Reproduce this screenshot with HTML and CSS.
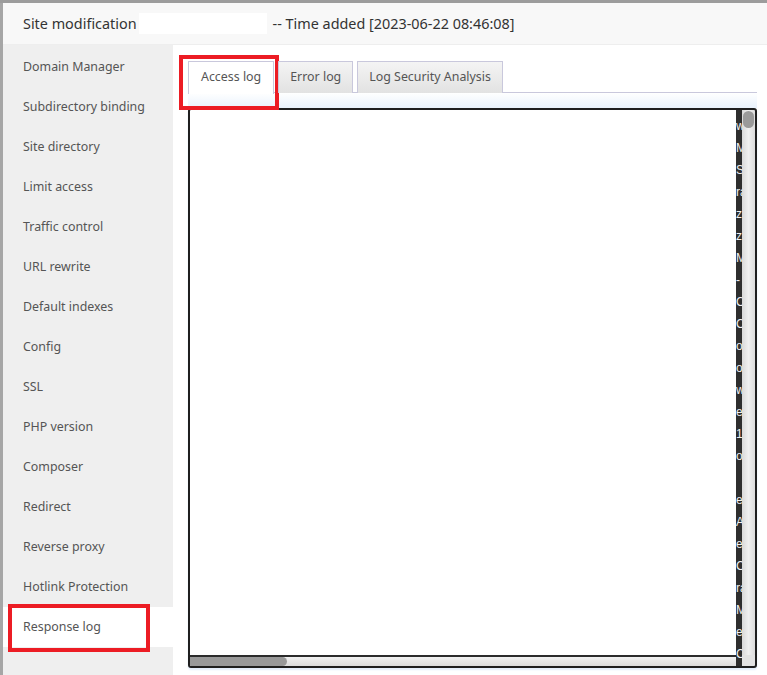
FILE: index.html
```html
<!DOCTYPE html>
<html>
<head>
<meta charset="utf-8">
<link rel="stylesheet" href="styles.css">
</head>
<body>
<div class="page">
  <div class="backdrop"></div>
  <div class="dialog">
    <div class="title">
      <span>Site modification</span>
      <span class="blot"></span>
      <span>-- Time added [2023-06-22 08:46:08]</span>
    </div>
    <div class="main">
      <ul class="sidebar">
        <li class="nav-item">Domain Manager</li>
        <li class="nav-item">Subdirectory binding</li>
        <li class="nav-item">Site directory</li>
        <li class="nav-item">Limit access</li>
        <li class="nav-item">Traffic control</li>
        <li class="nav-item">URL rewrite</li>
        <li class="nav-item">Default indexes</li>
        <li class="nav-item">Config</li>
        <li class="nav-item">SSL</li>
        <li class="nav-item">PHP version</li>
        <li class="nav-item">Composer</li>
        <li class="nav-item">Redirect</li>
        <li class="nav-item">Reverse proxy</li>
        <li class="nav-item">Hotlink Protection</li>
        <li class="nav-item active">Response log<span class="mark mark-nav"></span></li>
      </ul>
      <div class="content">
        <div class="tabs">
          <div class="tab active">Access log<span class="mark mark-tab"></span></div>
          <div class="tab">Error log</div>
          <div class="tab">Log Security Analysis</div>
        </div>
        <div class="glow"></div>
        <div class="logbox">
          <div class="log-text"></div>
          <div class="log-edge">
            <span>w</span><span>M</span><span>S</span><span>ra</span><span>z</span><span>z</span><span>M</span><span>-</span><span>O</span><span>O</span><span>o</span><span>o</span><span>w</span><span>e</span><span>1</span><span>o</span><span>&nbsp;</span><span>e</span><span>A</span><span>e</span><span>C</span><span>ra</span><span>M</span><span>e</span><span>C</span>
          </div>
          <div class="vscroll"><div class="vthumb"></div></div>
          <div class="hscroll"><div class="hthumb"></div></div>
          <div class="corner"></div>
        </div>
      </div>
    </div>
  </div>
</div>
</body>
</html>
```
FILE: styles.css
```css
* { box-sizing: border-box; }
html, body { margin: 0; padding: 0; }
body {
  background: #9c9c9c;
  font-family: "Noto Sans", "Open Sans", sans-serif;
  color: #555;
  overflow: hidden;
}
.page {
  display: flex;
  height: 675px;
  padding-top: 3px;
}
.backdrop {
  width: 3px;
  background: #a6a6a6;
}
.dialog {
  flex: 1;
  display: flex;
  flex-direction: column;
  background: #fff;
  height: 672px;
}
.title {
  height: 42px;
  line-height: 42px;
  background: #f8f8f8;
  border-bottom: 1px solid #eeeeee;
  padding-left: 20px;
  font-size: 14.4px;
  color: #333;
  display: flex;
  align-items: center;
  white-space: nowrap;
}
.blot {
  display: inline-block;
  width: 128px;
  height: 21px;
  background: #fff;
  margin: 0 6px 0 2px;
}
.main {
  flex: 1;
  display: flex;
  min-height: 0;
}
.sidebar {
  list-style: none;
  margin: 0;
  padding: 2px 0 0;
  width: 170px;
  background: #efefef;
}
.nav-item {
  position: relative;
  height: 40px;
  line-height: 40px;
  padding-left: 20px;
  font-size: 12.4px;
  color: #555;
  white-space: nowrap;
}
.nav-item.active { background: #fff; }
.mark {
  position: absolute;
  border: 4px solid #ec1c24;
  pointer-events: none;
}
.mark-nav { left: 5px; top: -3px; width: 142px; height: 48px; }
.mark-tab { left: -10px; top: -7px; width: 100px; height: 55px; }
.content {
  flex: 1;
  padding: 16px 10px 0 15px;
  display: flex;
  flex-direction: column;
}
.tabs {
  display: flex;
  gap: 4px;
  height: 32px;
  border-bottom: 1px solid #c9c8dc;
}
.tab {
  position: relative;
  height: 32px;
  line-height: 30px;
  padding: 0 11px;
  font-size: 12.4px;
  color: #555;
  border: 1px solid #c9c8dc;
  border-bottom: none;
  background: linear-gradient(#f4f4f4, #e2e2e2);
  white-space: nowrap;
}
.tab.active {
  background: #fff;
  height: 33px;
  padding: 0 12px;
}
.glow {
  height: 15px;
  background: linear-gradient(#ffffff, #e9f2fc);
}
.logbox {
  height: 560px;
  border: 2px solid #1f1f1f;
  border-radius: 3px;
  display: grid;
  grid-template-columns: 1fr 6px 13px;
  grid-template-rows: 1fr 11px;
  overflow: hidden;
  background: #2b2b2b;
  box-shadow: 0 2px 2px #e3eefb;
}
.log-text { background: #fff; }
.log-edge {
  background: #2e2e2e;
  overflow: hidden;
  display: flex;
  flex-direction: column;
  padding-top: 5px;
  font-family: "Liberation Sans", sans-serif;
  font-size: 12px;
  color: #f2f2f2;
  line-height: 22px;
  white-space: nowrap;
  grid-row: 1 / 3;
  grid-column: 2;
}
.vscroll {
  background: linear-gradient(90deg, #d9d9d9, #f0f0f0 50%, #dcdcdc);
  padding: 1px 1px;
}
.vthumb {
  height: 17px;
  background: #9a9a9a;
  border-radius: 6px;
}
.hscroll {
  grid-column: 1;
  background: linear-gradient(#f1f1f1, #dcdcdc);
  border-top: 2px solid #2b2b2b;
}
.hthumb {
  width: 97px;
  height: 100%;
  background: #999;
  border-radius: 0 5px 5px 0;
}
.corner {
  grid-column: 3;
  grid-row: 2;
  background: #e3e3e3;
}
```
